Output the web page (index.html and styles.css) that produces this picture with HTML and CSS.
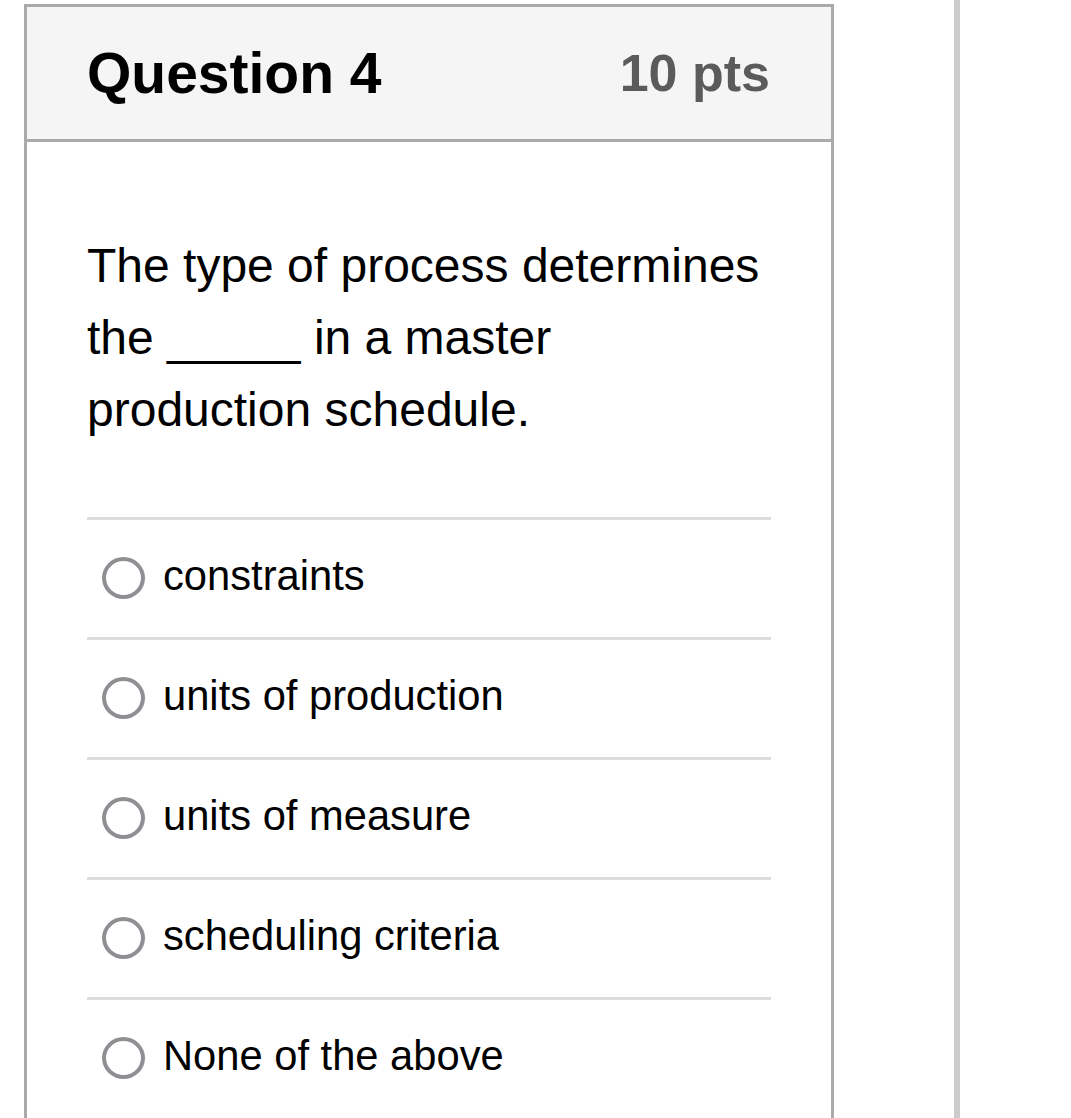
FILE: index.html
```html
<!DOCTYPE html>
<html lang="en">
<head>
<meta charset="utf-8">
<title>Question 4</title>
<link rel="stylesheet" href="styles.css">
</head>
<body>
<div class="page">
  <div class="quiz-card">
    <div class="quiz-header">
      <h2 class="quiz-title">Question 4</h2>
      <span class="quiz-points">10 pts</span>
    </div>
    <div class="quiz-body">
      <p class="quiz-text">The type of process determines the _____ in a master production schedule.</p>
      <ul class="answers">
        <li class="answer"><input class="radio" type="radio" name="q4"><span class="answer-label">constraints</span></li>
        <li class="answer"><input class="radio" type="radio" name="q4"><span class="answer-label">units of production</span></li>
        <li class="answer"><input class="radio" type="radio" name="q4"><span class="answer-label">units of measure</span></li>
        <li class="answer"><input class="radio" type="radio" name="q4"><span class="answer-label">scheduling criteria</span></li>
        <li class="answer"><input class="radio" type="radio" name="q4"><span class="answer-label">None of the above</span></li>
      </ul>
    </div>
  </div>
  <div class="rail"></div>
</div>
</body>
</html>
```

FILE: styles.css
```css
html, body {
  margin: 0;
  padding: 0;
  background: #ffffff;
}

body {
  font-family: "Liberation Sans", Arial, Helvetica, sans-serif;
  color: #000000;
  overflow: hidden;
}

.page {
  display: flex;
  align-items: flex-start;
  padding-left: 24px;
  min-height: 100vh;
}

.quiz-card {
  box-sizing: border-box;
  width: 810px;
  margin-top: 4px;
  border: 3px solid #aaaaaa;
  background: #ffffff;
  padding-bottom: 200px;
}

.quiz-header {
  box-sizing: border-box;
  height: 134.5px;
  display: flex;
  justify-content: space-between;
  align-items: center;
  padding: 0 61px 0 60px;
  background: #f5f5f5;
  border-bottom: 3px solid #aaaaaa;
}

.quiz-title {
  margin: 0;
  font-size: 57px;
  font-weight: bold;
  color: #000000;
}

.quiz-points {
  font-size: 52px;
  font-weight: bold;
  color: #5b5b5b;
}

.quiz-body {
  padding: 88px 60px 0 60px;
}

.quiz-text {
  margin: 0 0 71px 0;
  font-size: 48px;
  line-height: 72px;
}

.answers {
  list-style: none;
  margin: 0;
  padding: 0;
}

.answer {
  box-sizing: border-box;
  height: 120px;
  display: flex;
  align-items: center;
  border-top: 3px solid #dddddd;
}

.radio {
  appearance: none;
  -webkit-appearance: none;
  box-sizing: border-box;
  width: 43px;
  height: 42px;
  margin: 0 18px 0 15px;
  border: 4px solid #8e8e93;
  border-radius: 50%;
  background: #ffffff;
  flex-shrink: 0;
}

.answer-label {
  font-size: 41.7px;
  line-height: 48px;
  margin-top: -4px;
}

.rail {
  align-self: stretch;
  width: 6px;
  margin-left: 120px;
  background: #cccccc;
}
```
